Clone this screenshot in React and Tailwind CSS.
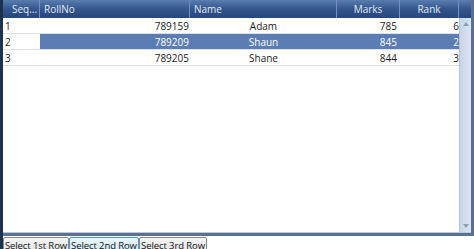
import React from "react";

const rows = [
  { seq: "1", roll: "789159", name: "Adam", marks: "785", rank: "6" },
  { seq: "2", roll: "789209", name: "Shaun", marks: "845", rank: "2", sel: true },
  { seq: "3", roll: "789205", name: "Shane", marks: "844", rank: "3" },
];

export default function App() {
  return (
    <div
      className="w-[474px] h-[249px] flex bg-white overflow-hidden text-[10px] leading-none"
      style={{ fontFamily: '"Open Sans", "Noto Sans", sans-serif' }}
    >
      <div className="w-[3px] shrink-0 bg-[#1f3150]" />
      <div className="flex flex-col w-[471px]">
        <div className="h-[236px] flex flex-col border-r-[3px] border-b-[3px] border-[#5a7092] shrink-0">
          {/* header */}
          <div className="flex h-[18px] shrink-0 bg-gradient-to-b from-[#5a7db1] via-[#34568d] to-[#26477d] text-[#e3ebf7]">
            <div className="w-[37px] flex items-center pl-[9px] border-r border-[#7390bb]">Seq...</div>
            <div className="w-[150px] flex items-center pl-[4px] border-r border-[#7390bb]">RollNo</div>
            <div className="w-[147px] flex items-center pl-[4px] border-r border-[#7390bb]">Name</div>
            <div className="w-[63px] flex items-center justify-center border-r border-[#7390bb]">Marks</div>
            <div className="w-[59px] flex items-center justify-center border-r border-[#7390bb]">Rank</div>
            <div className="w-[12px]" />
          </div>
          {/* body */}
          <div className="flex flex-1 min-h-0 border-b border-[#b9c8dc]">
            <div className="w-[456px] flex flex-col overflow-hidden">
              {rows.map((r) => (
                <div key={r.seq} className="flex h-[16px] shrink-0 border-b border-[#dde2e8] text-[#1b1b1b]">
                  <div className="w-[37px] flex items-center pl-[2px] bg-white">{r.seq}</div>
                  <div className={`flex flex-1 ${r.sel ? "bg-[#5b7db3] text-white" : ""}`}>
                    <div className="w-[150px] flex items-center justify-end pr-[1px]">{r.roll}</div>
                    <div className="w-[147px] flex items-center justify-center">{r.name}</div>
                    <div className="w-[63px] flex items-center justify-end pr-[3px]">{r.marks}</div>
                    <div className="w-[59px] flex items-center justify-end pr-0">{r.rank}</div>
                  </div>
                </div>
              ))}
            </div>
            <div className="w-[12px] flex flex-col justify-between items-center bg-gradient-to-r from-[#c8d5e6] to-[#dbe4f0] border-l border-[#b3c3d8] py-[4px]">
              <svg width="6" height="4" viewBox="0 0 6 4">
                <path d="M3 0 L6 4 L0 4 Z" fill="#8d9db3" />
              </svg>
              <svg width="6" height="4" viewBox="0 0 6 4">
                <path d="M0 0 L6 0 L3 4 Z" fill="#8d9db3" />
              </svg>
            </div>
          </div>
        </div>
        {/* buttons */}
        <div className="flex mt-[1px] text-[#111] text-[9.5px] tracking-[-0.1px]">
          <button className="w-[66px] h-[22px] shrink-0 border border-[#8a8a8a] rounded-[2px] bg-gradient-to-b from-[#f4f4f4] to-[#dcdcdc] flex items-start justify-center pt-[3px] px-0 whitespace-nowrap overflow-hidden">
            Select 1st Row
          </button>
          <button className="w-[70px] h-[22px] shrink-0 border border-[#4d9ad0] rounded-[2px] bg-gradient-to-b from-[#eaf6fd] to-[#c4e5f6] flex items-start justify-center pt-[3px] px-0 whitespace-nowrap overflow-hidden">
            Select 2nd Row
          </button>
          <button className="w-[68px] h-[22px] shrink-0 border border-[#8a8a8a] rounded-[2px] bg-gradient-to-b from-[#f4f4f4] to-[#dcdcdc] flex items-start justify-center pt-[3px] px-0 whitespace-nowrap overflow-hidden">
            Select 3rd Row
          </button>
        </div>
      </div>
    </div>
  );
}
